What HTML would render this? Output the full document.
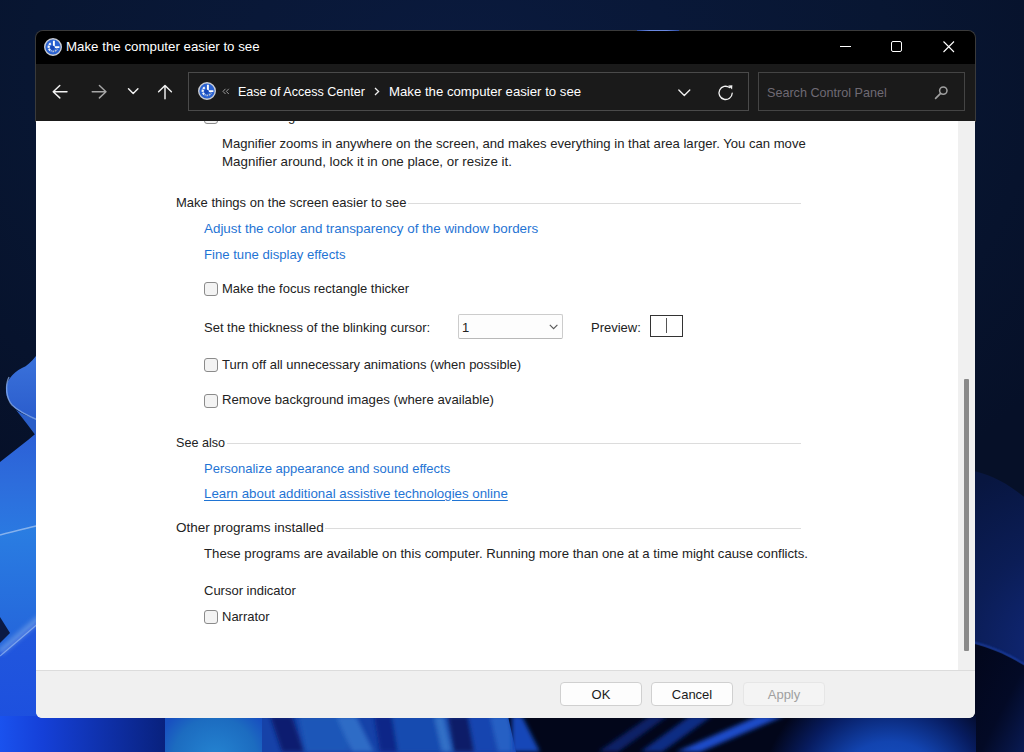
<!DOCTYPE html>
<html><head><meta charset="utf-8">
<style>
*{margin:0;padding:0;box-sizing:border-box}
html,body{width:1024px;height:752px;overflow:hidden;background:#071533}
body{position:relative;font-family:"Liberation Sans",sans-serif;font-size:13px;color:#222}
.a{position:absolute}
#bg{position:absolute;left:0;top:0;width:1024px;height:752px}
#win{position:absolute;left:36px;top:31px;width:939px;height:687px;border-radius:7px;background:#f0f0f0}
.t{position:absolute;white-space:pre;line-height:18px;height:18px}
.lk{color:#1f74d4}
.line{position:absolute;height:1px;background:#dcdcdc}
.cb{position:absolute;width:14px;height:14px;border:1px solid #8b8b8b;border-radius:3px;background:#f3f3f3}
.btn{position:absolute;height:24px;width:82px;border:1px solid #d0d0d0;border-radius:4px;background:#fdfdfd;text-align:center;line-height:23px;color:#1b1b1b}
</style></head><body>
<svg id="bg" width="1024" height="752" viewBox="0 0 1024 752">
  <defs>
    <radialGradient id="gTop" cx="0.45" cy="0.1" r="0.7">
      <stop offset="0" stop-color="#0a1a3e"/>
      <stop offset="0.6" stop-color="#081632"/>
      <stop offset="1" stop-color="#061028"/>
    </radialGradient>
    <linearGradient id="gL1" x1="0" y1="0" x2="0" y2="1">
      <stop offset="0" stop-color="#3c74dc"/><stop offset="1" stop-color="#2a5ccc"/>
    </linearGradient>
    <linearGradient id="gL2" x1="0" y1="0" x2="0" y2="1">
      <stop offset="0" stop-color="#2c5fd6"/><stop offset="0.5" stop-color="#2d6ddc"/><stop offset="1" stop-color="#2a7ae2"/>
    </linearGradient>
    <linearGradient id="gL3" x1="0" y1="0" x2="0" y2="1">
      <stop offset="0" stop-color="#2a7ee2"/><stop offset="1" stop-color="#2463da"/>
    </linearGradient>
    <linearGradient id="gL4" x1="0" y1="0" x2="0" y2="1">
      <stop offset="0" stop-color="#2258dc"/><stop offset="1" stop-color="#1b4de0"/>
    </linearGradient>
    <radialGradient id="gBR" cx="890" cy="800" r="130" gradientUnits="userSpaceOnUse">
      <stop offset="0" stop-color="#1a5cd4"/><stop offset="0.45" stop-color="#1244b0"/><stop offset="0.75" stop-color="#071c60"/><stop offset="1" stop-color="#02061a"/>
    </radialGradient>
    <filter id="blur05" x="-10%" y="-50%" width="120%" height="200%"><feGaussianBlur stdDeviation="0.8"/></filter>
    <filter id="blur1" x="-10%" y="-50%" width="120%" height="200%"><feGaussianBlur stdDeviation="2"/></filter>
    <linearGradient id="gBL" x1="0" y1="0" x2="1" y2="0">
      <stop offset="0" stop-color="#1a52ee"/><stop offset="0.25" stop-color="#1540d8"/><stop offset="1" stop-color="#08207a"/>
    </linearGradient>
    <radialGradient id="gCy" cx="215" cy="760" r="60" gradientUnits="userSpaceOnUse">
      <stop offset="0" stop-color="#2585d2"/><stop offset="0.7" stop-color="#1c6cc0"/><stop offset="1" stop-color="#1850c0"/>
    </radialGradient>
    <linearGradient id="gRB" x1="0" y1="0" x2="1" y2="1">
      <stop offset="0" stop-color="#02061a"/><stop offset="0.55" stop-color="#030a26"/><stop offset="1" stop-color="#0a1e5e"/>
    </linearGradient>
    <radialGradient id="gR" cx="1070" cy="650" r="190" gradientUnits="userSpaceOnUse">
      <stop offset="0" stop-color="#112a80"/><stop offset="0.55" stop-color="#0b1d56"/><stop offset="1" stop-color="#081640"/>
    </radialGradient>
  </defs>
  <rect width="1024" height="752" fill="url(#gTop)"/>
  <!-- left petals -->
  <path d="M40 350 L36 356 C31 362 27 366 22 368 C12 373 5 382 6 392 C7 402 16 410 24 414 C30 417 35 419 40 421 Z" fill="url(#gL1)"/>
  <path d="M16 410 C24 420 32 430 40 442 L40 420 C32 418 22 414 16 410 Z" fill="#2a5ec8"/>
  <path d="M9 377 C5 385 6 398 12 405 C18 411 28 416 40 421" fill="none" stroke="#8fb2ee" stroke-width="1.4" opacity="0.7"/>
  <path d="M0 462 L28 440 L40 430 L40 530 L0 538 Z" fill="url(#gL2)"/>
  <path d="M0 536 L40 526 L40 625 L0 655 Z" fill="url(#gL3)"/>
  <path d="M0 535 C14 531 28 528 40 525" fill="none" stroke="#9cc0f0" stroke-width="1.6" opacity="0.8"/>
  <path d="M0 617 L10 633 L0 643 Z" fill="#0b1a44"/>
  <path d="M0 652 L40 618 L40 760 L0 760 Z" fill="url(#gL4)"/>
  <path d="M0 652 L40 618" fill="none" stroke="#6e9ce8" stroke-width="7" opacity="0.65" filter="url(#blur1)"/>
  <path d="M0 656 L40 622" fill="none" stroke="#a8c6f4" stroke-width="1.2" opacity="0.6"/>
  <!-- right side -->
  <path d="M970 470 C990 474 1010 484 1030 502 L1030 668 C1010 656 995 648 970 642 Z" fill="url(#gR)"/>
  <path d="M970 642 C995 648 1010 656 1030 668" fill="none" stroke="#1d3fa8" stroke-width="2.5" opacity="0.85" filter="url(#blur05)"/>
  <path d="M970 643 C995 649 1010 657 1030 669 L1030 760 L970 760 Z" fill="url(#gRB)"/>
  <!-- bottom strip -->
  <rect x="0" y="716" width="170" height="40" fill="url(#gBL)"/>
  <rect x="165" y="716" width="100" height="40" fill="url(#gCy)"/>
  <rect x="262" y="716" width="260" height="40" fill="#1642a8"/>
  <g filter="url(#blur1)">
  <path d="M270 716 L292 716 L304 752 L282 752 Z" fill="#0a1f70"/>
  <path d="M298 716 L340 716 L350 752 L306 752 Z" fill="#1d56b8"/>
  <path d="M336 716 L356 716 L374 752 L352 752 Z" fill="#2e6cc6"/>
  <path d="M374 716 L392 716 L398 752 L380 752 Z" fill="#0c2888"/>
  <path d="M392 716 L436 716 L444 752 L398 752 Z" fill="#184cb0"/>
  <path d="M434 716 L444 716 L452 752 L442 752 Z" fill="#3070c6"/>
  <path d="M448 716 L468 716 L474 752 L454 752 Z" fill="#0a1e68"/>
  <path d="M468 716 L490 716 L496 752 L476 752 Z" fill="#1844b0"/>
  <path d="M490 716 L508 716 L518 752 L498 752 Z" fill="#2660c4"/>
  </g>
  <path d="M508 716 L522 716 L522 752 L516 752 Z" fill="#040a2c"/>
  <rect x="520" y="716" width="456" height="40" fill="#02061a"/>
  <rect x="700" y="716" width="276" height="40" fill="url(#gBR)"/>
  <g filter="url(#blur1)">
  <path d="M512 716 L522 716 L540 752 L512 752 Z" fill="#1646b8"/>
  <path d="M598 752 L650 716 L668 716 L618 752 Z" fill="#0a2470" opacity="0.9"/>
  <path d="M640 752 L690 716 L712 716 L662 752 Z" fill="#0e3090" opacity="0.9"/>
  <path d="M676 752 L758 716 L784 716 L700 752 Z" fill="#1a4cc8"/>
  </g>
  </svg>

<div id="win"></div>
<!-- title bar -->
<div class="a" style="left:35px;top:30px;width:941px;height:92px;border:1px solid #3a3a3a;border-bottom:none;border-radius:8px 8px 0 0;background:#1a1a1a"></div>
<div class="a" style="left:36px;top:31px;width:939px;height:33px;background:#000;border-radius:7px 7px 0 0"></div>
<div class="a" style="left:637px;top:30px;width:42px;height:1px;background:linear-gradient(90deg,#2a4aa0,#6a88e0 30%,#6a88e0 70%,#2a4aa0)"></div>
<div class="t" style="left:66px;top:38px;color:#fff;font-size:13.3px">Make the computer easier to see</div>
<svg class="a" style="left:43px;top:37px" width="20" height="20" viewBox="-10 -10 20 20">
<circle r="8.3" fill="#2a62d2" stroke="#c9ccd3" stroke-width="1.4"/>
<path d="M-2.2 -3.6 A4.2 4.2 0 0 0 -1.5 4.0" fill="none" stroke="#f4f6fa" stroke-width="2.2" stroke-dasharray="2.2 0.8"/>
<path d="M-0.5 4.4 A4.4 4.4 0 0 0 4.2 1.6" fill="none" stroke="#b8c0d0" stroke-width="1.6" stroke-dasharray="1.6 0.9"/>
<path d="M0.9 -6.2 V-0.4 M1.8 0.1 H6.4" fill="none" stroke="#ffffff" stroke-width="1.9"/>
<circle cx="-0.6" cy="0.8" r="2.2" fill="#1848b8"/>
</svg>
<svg class="a" style="left:830px;top:36px" width="140" height="22" viewBox="830 36 140 22">
<path d="M840 46.5 H851" stroke="#fff" stroke-width="1"/>
<rect x="891.5" y="41.5" width="10" height="10" rx="1.5" fill="none" stroke="#fff" stroke-width="1"/>
<path d="M943.5 41.5 L954 52 M954 41.5 L943.5 52" stroke="#fff" stroke-width="1.1"/>
</svg>
<!-- content -->
<div class="a" style="left:36px;top:121px;width:922px;height:549px;background:#fff"></div>
<div class="a" style="left:958px;top:121px;width:17px;height:549px;background:#f0f0f0"></div>
<div class="a" style="left:964px;top:379px;width:5px;height:272px;background:#8a8a8a;border-radius:1px"></div>
<!-- footer -->
<div class="a" style="left:36px;top:670px;width:939px;height:48px;background:#f0f0f0;border-top:1px solid #dcdcdc;border-radius:0 0 6px 6px"></div>
<div class="btn" style="left:560px;top:682px">OK</div>
<div class="btn" style="left:651px;top:682px">Cancel</div>
<div class="btn" style="left:743px;top:682px;color:#a0a0a0;border-color:#e6e6e6;background:#f4f4f4">Apply</div>

<!-- body text -->
<div class="cb" style="left:204px;top:110px"></div>
<div class="t" style="left:222px;top:108px">Turn on Magnifier</div>
<!-- nav bar -->
<div class="a" style="left:36px;top:64px;width:939px;height:57px;background:#1a1a1a"></div>
<div class="a" style="left:188px;top:72px;width:561px;height:39px;border:1px solid #4a4a4a"></div>
<div class="a" style="left:758px;top:72px;width:207px;height:39px;border:1px solid #444"></div>
<div class="t" style="left:238px;top:83px;color:#fff;font-size:12.55px">Ease of Access Center</div>
<div class="t" style="left:389px;top:83px;color:#fff;font-size:13.2px">Make the computer easier to see</div>
<div class="t" style="left:767px;top:84px;color:#6f6a74;font-size:12.6px">Search Control Panel</div>

<svg class="a" style="left:40px;top:78px" width="150" height="28" viewBox="40 78 150 28">
<g fill="none" stroke-linecap="round" stroke-linejoin="round" stroke-width="1.45">
<path d="M67 91.7 H53.2 M59.8 85.5 L53.2 91.7 L59.8 97.9" stroke="#f2f2f2"/>
<path d="M92.2 91.7 H106 M99.4 85.5 L106 91.7 L99.4 97.9" stroke="#a6a6a6"/>
<path d="M128.5 88.8 L133.2 93.5 L137.9 88.8" stroke="#f2f2f2"/>
<path d="M165 98.8 V85.6 M158.6 91.8 L165 85.6 L171.4 91.8" stroke="#f2f2f2"/>
</g></svg>
<svg class="a" style="left:197px;top:81px" width="20" height="20" viewBox="-10 -10 20 20">
<circle r="8.30" fill="#2a62d2" stroke="#c9ccd3" stroke-width="1.4"/>
<path d="M-2.20 -3.60 A4.20 4.20 0 0 0 -1.50 4.00" fill="none" stroke="#f4f6fa" stroke-width="2.20" stroke-dasharray="2.20 0.80"/>
<path d="M-0.50 4.40 A4.40 4.40 0 0 0 4.20 1.60" fill="none" stroke="#b8c0d0" stroke-width="1.60" stroke-dasharray="1.60 0.90"/>
<path d="M0.90 -6.20 V-0.40 M1.80 0.10 H6.40" fill="none" stroke="#ffffff" stroke-width="1.90"/>
<circle cx="-0.60" cy="0.80" r="2.20" fill="#1848b8"/>
</svg>
<svg class="a" style="left:220px;top:86px" width="12" height="12" viewBox="220 86 12 12">
<path d="M225.5 88.8 L223 91.4 L225.5 94 M228.8 88.8 L226.3 91.4 L228.8 94" fill="none" stroke="#9a9a9a" stroke-width="1"/>
</svg>
<svg class="a" style="left:370px;top:84px" width="14" height="14" viewBox="370 84 14 14">
<path d="M375 88 L378.6 91.5 L375 95" fill="none" stroke="#f0f0f0" stroke-width="1.3"/>
</svg>
<svg class="a" style="left:674px;top:84px" width="64" height="20" viewBox="674 84 64 20">
<g fill="none" stroke="#f0f0f0" stroke-width="1.3" stroke-linecap="round" stroke-linejoin="round">
<path d="M678.8 90 L684.3 95.5 L689.8 90"/>
<path d="M732.2 93.2 A6.6 6.6 0 1 1 729.6 87.6"/>
</g>
<path d="M728.2 85.6 L732.4 85.3 L732.1 89.6 Z" fill="#f0f0f0"/>
</svg>
<svg class="a" style="left:930px;top:82px" width="20" height="20" viewBox="930 82 20 20">
<circle cx="943.3" cy="90.6" r="3.7" fill="none" stroke="#a0a0a0" stroke-width="1.5"/>
<path d="M940.6 93.4 L935.6 98.3" stroke="#a0a0a0" stroke-width="1.7" stroke-linecap="round"/>
</svg>

<div class="t" style="left:222px;top:135px;font-size:13.1px">Magnifier zooms in anywhere on the screen, and makes everything in that area larger. You can move</div>
<div class="t" style="left:222px;top:153px;font-size:13.35px">Magnifier around, lock it in one place, or resize it.</div>

<div class="t" style="left:176px;top:194px">Make things on the screen easier to see</div>
<div class="line" style="left:408px;top:203px;width:393px"></div>
<div class="t lk" style="left:204px;top:220px;font-size:13.4px">Adjust the color and transparency of the window borders</div>
<div class="t lk" style="left:204px;top:246px;font-size:13.15px">Fine tune display effects</div>
<div class="cb" style="left:204px;top:282px"></div>
<div class="t" style="left:222px;top:280px">Make the focus rectangle thicker</div>
<div class="t" style="left:204px;top:319px">Set the thickness of the blinking cursor:</div>
<div class="a" style="left:458px;top:314px;width:105px;height:25px;border:1px solid #cccccc;border-bottom-color:#b8b8b8;border-radius:2px;background:#fdfdfd"></div>
<div class="t" style="left:462px;top:319px">1</div>
<svg class="a" style="left:546px;top:321px" width="14" height="10" viewBox="546 321 14 10"><path d="M549.8 324.8 L553.6 328.6 L557.4 324.8" fill="none" stroke="#5a5a5a" stroke-width="1.15"/></svg>
<div class="t" style="left:591px;top:319px">Preview:</div>
<div class="a" style="left:650px;top:315px;width:33px;height:22px;border:1.5px solid #333"></div>
<div class="a" style="left:666px;top:318px;width:1px;height:15px;background:#555"></div>
<div class="cb" style="left:204px;top:358px"></div>
<div class="t" style="left:222px;top:356px">Turn off all unnecessary animations (when possible)</div>
<div class="cb" style="left:204px;top:394px"></div>
<div class="t" style="left:222px;top:391px;font-size:13.2px">Remove background images (where available)</div>

<div class="t" style="left:176px;top:434px;font-size:12.6px">See also</div>
<div class="line" style="left:227px;top:443px;width:574px"></div>
<div class="t lk" style="left:204px;top:460px">Personalize appearance and sound effects</div>
<div class="t lk" style="left:204px;top:485px;text-decoration:underline;text-underline-offset:2px;font-size:13.3px">Learn about additional assistive technologies online</div>

<div class="t" style="left:176px;top:519px;font-size:13.5px">Other programs installed</div>
<div class="line" style="left:325px;top:528px;width:476px"></div>
<div class="t" style="left:204px;top:545px;font-size:13.2px">These programs are available on this computer. Running more than one at a time might cause conflicts.</div>
<div class="t" style="left:204px;top:582px">Cursor indicator</div>
<div class="cb" style="left:204px;top:610px"></div>
<div class="t" style="left:222px;top:608px">Narrator</div>
</body></html>
